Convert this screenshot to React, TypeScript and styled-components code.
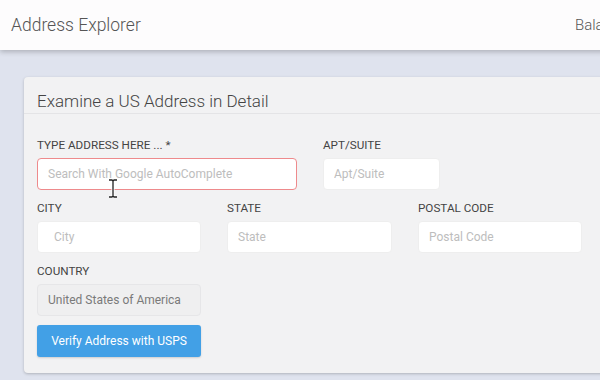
import React from "react";
import styled, { createGlobalStyle } from "styled-components";

const Global = createGlobalStyle`
  html, body { margin: 0; padding: 0; width: 600px; height: 380px; overflow: hidden; }
  body { background: #dfe3ee; font-family: Roboto, "Noto Sans", Arial, sans-serif; }
`;

const Page = styled.div`
  width: 680px;
  height: 380px;
  display: flex;
  flex-direction: column;
`;

const Header = styled.header`
  height: 50px;
  background: #fdfcfd;
  box-shadow: 0 2px 5px rgba(0, 0, 0, 0.22);
  display: flex;
  align-items: center;
  padding-left: 11px;
  position: relative;
  z-index: 1;
`;

const Title = styled.div`
  font-size: 17.5px;
  font-weight: 300;
  color: #555;
`;

const User = styled.div`
  margin-left: auto;
  width: 105px;
  font-size: 15px;
  font-weight: 300;
  color: #555;
`;

const Main = styled.main`
  padding: 27px 0 0 24px;
`;

const Card = styled.section`
  background: #f2f2f3;
  border-radius: 4px;
  box-shadow: 0 1px 3px rgba(0, 0, 0, 0.22);
  width: 640px;
  position: relative;
`;

const CardHead = styled.div`
  height: 37px;
  box-sizing: border-box;
  padding: 14px 13px 0;
  border-bottom: 1px solid #e4e4e6;
  font-size: 17px;
  font-weight: 300;
  color: #444;
  line-height: 20px;
`;

const CardBody = styled.div`
  padding: 25px 13px 16px;
  display: flex;
  flex-direction: column;
  gap: 12px;
`;

const Row = styled.div`
  display: flex;
  gap: 26px;
`;

const Field = styled.div<{ $w: number }>`
  width: ${(p) => p.$w}px;
  display: flex;
  flex-direction: column;
`;

const Label = styled.label`
  font-size: 11.7px;
  line-height: 13px;
  color: #444;
  margin-bottom: 6px;
  text-transform: uppercase;
`;

const Input = styled.input<{ $error?: boolean; $pad?: number }>`
  box-sizing: border-box;
  height: 32px;
  width: 100%;
  border: 1px solid ${(p) => (p.$error ? "#ee8a8c" : "#eeeeee")};
  border-radius: 4px;
  background: #fff;
  padding: 0 8px 0 ${(p) => p.$pad ?? 10}px;
  font-family: Roboto, "Noto Sans", Arial, sans-serif;
  font-size: 12px;
  color: #777;
  outline: none;
  &::placeholder { color: #bdbdbd; }
  &:disabled { background: #efeff0; border-color: #e6e6e8; color: #7a7a7a; }
`;

const Button = styled.button`
  width: 164px;
  height: 32px;
  margin-top: -3px;
  border: none;
  border-radius: 3px;
  background: #42a0e6;
  color: #fff;
  font-family: Roboto, "Noto Sans", Arial, sans-serif;
  font-size: 12px;
  box-shadow: 0 1px 2px rgba(0, 0, 0, 0.15);
`;

const Cursor = styled.svg`
  position: absolute;
  left: 84px;
  top: 102px;
`;

export default function App() {
  return (
    <>
      <Global />
      <Page>
        <Header>
          <Title>Address Explorer</Title>
          <User>Balaji</User>
        </Header>
        <Main>
          <Card>
            <CardHead>Examine a US Address in Detail</CardHead>
            <CardBody>
              <Row>
                <Field $w={260}>
                  <Label>Type Address Here ... *</Label>
                  <Input $error placeholder="Search With Google AutoComplete" />
                </Field>
                <Field $w={117}>
                  <Label>Apt/Suite</Label>
                  <Input placeholder="Apt/Suite" />
                </Field>
              </Row>
              <Row>
                <Field $w={164}>
                  <Label>City</Label>
                  <Input $pad={16} placeholder="City" />
                </Field>
                <Field $w={165}>
                  <Label>State</Label>
                  <Input placeholder="State" />
                </Field>
                <Field $w={164}>
                  <Label>Postal Code</Label>
                  <Input placeholder="Postal Code" />
                </Field>
              </Row>
              <Row>
                <Field $w={164}>
                  <Label>Country</Label>
                  <Input disabled value="United States of America" readOnly />
                </Field>
              </Row>
              <Row>
                <Button>Verify Address with USPS</Button>
              </Row>
            </CardBody>
            <Cursor width="10" height="19" viewBox="0 0 10 19">
              <path d="M1 1h3l1 1 1-1h3M5 2v15M1 18h3l1-1 1 1h3" stroke="#fff" strokeWidth="3" fill="none" />
              <path d="M1 1h3l1 1 1-1h3M5 2v15M1 18h3l1-1 1 1h3" stroke="#222" strokeWidth="1.3" fill="none" />
            </Cursor>
          </Card>
        </Main>
      </Page>
    </>
  );
}
